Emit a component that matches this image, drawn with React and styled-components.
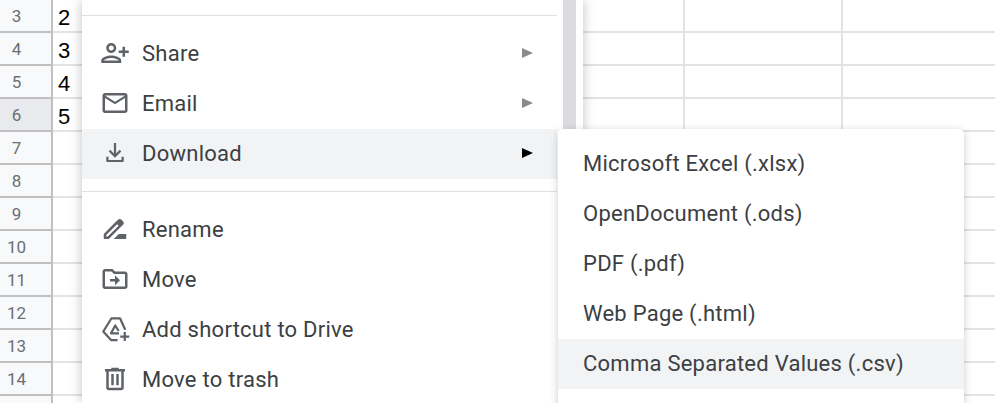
import React from 'react';
import styled, { createGlobalStyle } from 'styled-components';

const GlobalStyle = createGlobalStyle`
  html, body {
    margin: 0;
    padding: 0;
    height: 100%;
    overflow: hidden;
    background: #ffffff;
  }
`;

const Page = styled.div`
  position: relative;
  width: 995px;
  height: 403px;
  overflow: hidden;
  background: #ffffff;
`;

const Sheet = styled.div`
  display: flex;
  flex-direction: column;
`;

const SheetRow = styled.div`
  display: flex;
  height: 33px;
  box-sizing: border-box;
  border-bottom: 2px solid #e2e3e3;
`;

const RowHead = styled.div`
  flex: 0 0 53px;
  box-sizing: border-box;
  margin-bottom: -2px;
  display: flex;
  align-items: center;
  justify-content: center;
  padding-right: 18px;
  border-right: 2px solid #c0c0c0;
  border-bottom: 2px solid #c0c0c0;
  background: ${(p) => (p.$active ? '#e8eaed' : '#f8f9fa')};
  color: #6c6f73;
  font: 17px Roboto, sans-serif;
`;

const NumCell = styled.div`
  flex: 0 0 28px;
  padding: 4px 0 0 5px;
  box-sizing: border-box;
  color: #000000;
  font: 22px/28px "Liberation Sans", Arial, sans-serif;
`;

const GridLine = styled.div`
  position: absolute;
  top: 0;
  bottom: 0;
  width: 2px;
  left: ${(p) => p.$x}px;
  background: #e2e3e3;
`;

const Menu = styled.div`
  position: absolute;
  left: 82px;
  top: 0;
  bottom: 0;
  width: 501px;
  background: #ffffff;
  box-shadow: -3px 0 10px rgba(0, 0, 0, 0.12), 3px 0 10px rgba(0, 0, 0, 0.12);
  display: flex;
`;

const MenuList = styled.div`
  flex: 0 0 475px;
  padding-top: 15px;
`;

const Scrollbar = styled.div`
  flex: 0 0 13px;
  margin-left: 6px;
  background: #dadce0;
`;

const Divider = styled.div`
  height: 1px;
  background: #dfe1e3;
  margin: 12px 0;

  &:first-child {
    margin: 0 0 13px;
  }
`;

const Item = styled.div`
  display: flex;
  align-items: center;
  height: 50px;
  box-sizing: border-box;
  padding: 0 0 ${(p) => (p.$raised ? 2 : 0)}px 18px;
  background: ${(p) => (p.$active ? '#f1f3f4' : 'transparent')};
  color: #3c4043;
  font: 22px Roboto, sans-serif;
  letter-spacing: 0.25px;
`;

const IconSlot = styled.svg`
  width: 30px;
  height: 30px;
  flex: none;
  margin-right: 12px;
  fill: #5f6368;
`;

const Outline = styled.path`
  fill: none;
  stroke: #5f6368;
  stroke-width: 1.8;
  stroke-linejoin: round;
`;

const Label = styled.span`
  flex: 1;
`;

const Arrow = styled.span`
  width: 0;
  height: 0;
  margin-right: 24px;
  border-style: solid;
  border-width: 5.5px 0 5.5px 11px;
  border-color: transparent transparent transparent ${(p) => (p.$active ? '#000000' : '#8a8a8a')};
`;

const SubMenu = styled.div`
  position: absolute;
  left: 558px;
  top: 129px;
  width: 406px;
  height: 290px;
  box-sizing: border-box;
  padding-top: 10px;
  border-radius: 5px;
  background: #ffffff;
  box-shadow: 0 2px 8px rgba(0, 0, 0, 0.2);
`;

const SubItem = styled.div`
  display: flex;
  align-items: center;
  height: 50px;
  box-sizing: border-box;
  padding: 0 0 2px 25px;
  background: ${(p) => (p.$active ? '#f1f3f4' : 'transparent')};
  color: #3c4043;
  font: 22px Roboto, sans-serif;
  letter-spacing: 0.25px;
`;

const ShareIcon = () => (
  <IconSlot viewBox="0 0 24 24">
    <g transform="translate(24 0) scale(-1 1)">
      <path d="M15 12c2.21 0 4-1.79 4-4s-1.79-4-4-4-4 1.79-4 4 1.79 4 4 4zm0-6c1.1 0 2 .9 2 2s-.9 2-2 2-2-.9-2-2 .9-2 2-2zm0 8c-2.67 0-8 1.34-8 4v2h16v-2c0-2.66-5.33-4-8-4zm-6 4c.22-.72 3.31-2 6-2 2.7 0 5.8 1.29 6 2H9zm-3-3v-3h3v-2H6V7H4v3H1v2h3v3h2z" />
    </g>
  </IconSlot>
);

const EmailIcon = () => (
  <IconSlot viewBox="0 0 24 24">
    <path d="M20 4H4c-1.1 0-1.99.9-1.99 2L2 18c0 1.1.9 2 2 2h16c1.1 0 2-.9 2-2V6c0-1.1-.9-2-2-2zm0 14H4V8l8 5 8-5v10zm-8-7L4 6h16l-8 5z" />
  </IconSlot>
);

const DownloadIcon = () => (
  <IconSlot viewBox="0 0 24 24">
    <path d="M11.1 4h1.8v8.3l2.9-2.9 1.2 1.3-5 5-5-5 1.2-1.3 2.9 2.9z" />
    <path d="M5 15h1.8v2.6h10.4V15H19v3.2c0 .6-.5 1-1 1H6c-.5 0-1-.4-1-1z" />
  </IconSlot>
);

const RenameIcon = () => (
  <IconSlot viewBox="0 0 24 24">
    <path d="M18.41 5.8L17.2 4.59c-.78-.78-2.05-.78-2.83 0l-2.68 2.68L3 15.96V20h4.04l8.74-8.74 2.63-2.63c.79-.78.79-2.05 0-2.83zM6.21 18H5v-1.21l8.66-8.66 1.21 1.21L6.21 18zM11 20l4-4h6v4H11z" />
  </IconSlot>
);

const MoveIcon = () => (
  <IconSlot viewBox="0 0 24 24">
    <path d="M20 6h-8l-2-2H4c-1.1 0-1.99.9-1.99 2L2 18c0 1.1.9 2 2 2h16c1.1 0 2-.9 2-2V8c0-1.1-.9-2-2-2zm0 12H4V6h5.17l2 2H20v10zm-8-4H8v-2h4V9l4 4-4 4v-3z" />
  </IconSlot>
);

const ShortcutIcon = () => (
  <IconSlot viewBox="0 0 24 24">
    <Outline d="M14 20.8H8.8L2.6 14 9.2 3.4H16L20.2 12.6" />
    <Outline d="M14.9 13.6L12.2 9.2 8.8 15.4H15.2" />
    <path d="M18.9 14.4h1.8v2.7h2.7v1.8h-2.7v2.7h-1.8v-2.7h-2.7v-1.8h2.7z" />
  </IconSlot>
);

const TrashIcon = () => (
  <IconSlot viewBox="0 0 24 24">
    <path d="M15 4V3H9v1H4v2h1v13c0 1.1.9 2 2 2h10c1.1 0 2-.9 2-2V6h1V4h-5zm2 15H7V6h10v13zM9 8h2v9H9zm4 0h2v9h-2z" />
  </IconSlot>
);

const rows = [
  { n: 3, value: 2 },
  { n: 4, value: 3 },
  { n: 5, value: 4 },
  { n: 6, value: 5, active: true },
  { n: 7 },
  { n: 8 },
  { n: 9 },
  { n: 10 },
  { n: 11 },
  { n: 12 },
  { n: 13 },
  { n: 14 },
];

const formats = [
  'Microsoft Excel (.xlsx)',
  'OpenDocument (.ods)',
  'PDF (.pdf)',
  'Web Page (.html)',
  'Comma Separated Values (.csv)',
];

export default function App() {
  return (
    <Page>
      <GlobalStyle />
      <Sheet>
        {rows.map((r) => (
          <SheetRow key={r.n}>
            <RowHead $active={r.active}>{r.n}</RowHead>
            <NumCell>{r.value}</NumCell>
          </SheetRow>
        ))}
        <SheetRow>
          <RowHead />
        </SheetRow>
      </Sheet>
      <GridLine $x={683} />
      <GridLine $x={841} />

      <Menu>
        <MenuList>
          <Divider />
          <Item $raised>
            <ShareIcon />
            <Label>Share</Label>
            <Arrow />
          </Item>
          <Item $raised>
            <EmailIcon />
            <Label>Email</Label>
            <Arrow />
          </Item>
          <Item $raised $active>
            <DownloadIcon />
            <Label>Download</Label>
            <Arrow $active />
          </Item>
          <Divider />
          <Item>
            <RenameIcon />
            <Label>Rename</Label>
          </Item>
          <Item>
            <MoveIcon />
            <Label>Move</Label>
          </Item>
          <Item>
            <ShortcutIcon />
            <Label>Add shortcut to Drive</Label>
          </Item>
          <Item>
            <TrashIcon />
            <Label>Move to trash</Label>
          </Item>
        </MenuList>
        <Scrollbar />
      </Menu>

      <SubMenu>
        {formats.map((f, i) => (
          <SubItem key={f} $active={i === formats.length - 1}>
            {f}
          </SubItem>
        ))}
      </SubMenu>
    </Page>
  );
}
